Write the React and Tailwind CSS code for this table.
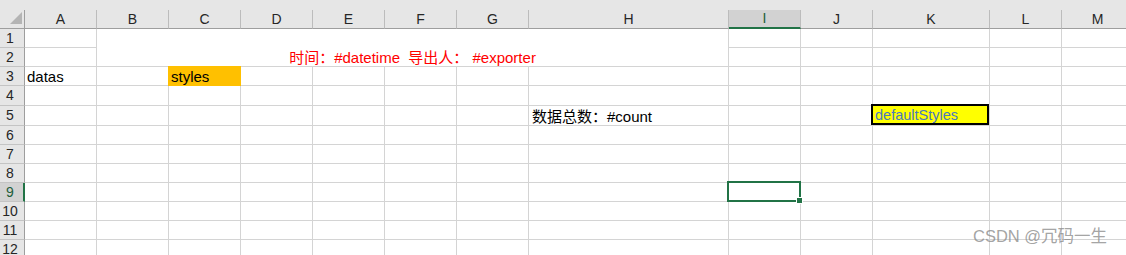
import React from 'react';

const COLS = ['A', 'B', 'C', 'D', 'E', 'F', 'G', 'H', 'I', 'J', 'K', 'L', 'M'];
const ROWS = [1, 2, 3, 4, 5, 6, 7, 8, 9, 10, 11, 12];
const MERGED = ['B', 'C', 'D', 'E', 'F', 'G', 'H'];

const GRID = 'border-r border-b border-[#d4d4d4]';
const TEXT = 'flex items-end pl-[2px] text-[15px] leading-[16px] whitespace-nowrap';

function ColHeader({ label, active }) {
  return (
    <div className="flex items-end bg-[#e6e6e6]">
      <div
        className={
          active
            ? 'flex h-[19px] w-full items-center justify-center border-r border-b-2 border-r-[#bcbcbc] border-b-[#217346] bg-[#d2d2d2] pb-px text-[14px] text-[#1e5e3a]'
            : 'flex h-[19px] w-full items-center justify-center border-r border-b border-r-[#bcbcbc] border-b-[#9e9e9e] pt-px text-[14px] text-[#262626]'
        }
      >
        {label}
      </div>
    </div>
  );
}

function RowHeader({ n, active }) {
  return (
    <div
      className={
        active
          ? 'flex items-center justify-center border-r-2 border-b border-r-[#217346] border-b-[#c4c4c4] bg-[#d2d2d2] pr-[3px] text-[14px] text-[#1e5e3a]'
          : 'flex items-center justify-center border-r border-b border-r-[#9e9e9e] border-b-[#c4c4c4] bg-[#e6e6e6] pr-[4px] text-[14px] text-[#262626]'
      }
    >
      {n}
    </div>
  );
}

function DataCell({ col, row }) {
  if (col === 'A' && row === 3) {
    return <div className={`${GRID} ${TEXT}`}>datas</div>;
  }
  if (col === 'C' && row === 3) {
    return (
      <div className={`relative ${GRID} ${TEXT}`}>
        <div className="absolute -top-px -left-px right-[-1px] bottom-[-1px] bg-[#ffc000]" />
        <span className="relative">styles</span>
      </div>
    );
  }
  if (col === 'H' && row === 5) {
    return <div className={`${GRID} ${TEXT} pl-[3px]`}>数据总数：#count</div>;
  }
  if (col === 'K' && row === 5) {
    return (
      <div className={`relative ${GRID}`}>
        <div className="absolute top-[-2px] left-[-2px] right-0 bottom-0 flex items-end border-2 border-black bg-[#ffff00] pl-[2px] text-[14.5px] leading-[16px] whitespace-nowrap text-[#4a78be]">
          defaultStyles
        </div>
      </div>
    );
  }
  if (col === 'I' && row === 9) {
    return (
      <div className={`relative ${GRID}`}>
        <div className="absolute top-[-2px] left-[-2px] right-[-1px] bottom-[-1px] border-2 border-[#217346]" />
        <div className="absolute right-[-3px] bottom-[-3px] h-[7px] w-[7px] border border-white bg-[#217346]" />
      </div>
    );
  }
  return <div className={GRID} />;
}

export default function App() {
  const cells = [];

  // corner cell with the select-all triangle
  cells.push(
    <div key="corner" className="flex items-end bg-[#e6e6e6]">
      <div className="relative h-[19px] w-full border-r border-b border-r-[#9e9e9e] border-b-[#9e9e9e]">
        <svg className="absolute left-[10px] top-[2px]" width="13" height="13" viewBox="0 0 13 13">
          <polygon points="12,0 12,12 0,12" fill="#b4b4b4" />
        </svg>
      </div>
    </div>
  );

  COLS.forEach((c) => cells.push(<ColHeader key={`h-${c}`} label={c} active={c === 'I'} />));

  ROWS.forEach((r) => {
    cells.push(<RowHeader key={`r-${r}`} n={r} active={r === 9} />);
    COLS.forEach((c) => {
      if (r === 1 && c === 'B') {
        cells.push(
          <div
            key="merged"
            className={`col-span-7 row-span-2 ${GRID} flex items-end justify-center text-[15px] leading-[16px] whitespace-pre text-[#ff0000]`}
          >
            {'时间：#datetime  导出人： #exporter'}
          </div>
        );
        return;
      }
      if (r <= 2 && MERGED.includes(c)) return;
      cells.push(<DataCell key={`${c}${r}`} col={c} row={r} />);
    });
  });

  return (
    <div className="relative h-[255px] w-[1126px] overflow-hidden bg-white font-['Liberation_Sans','Noto_Sans_CJK_SC',sans-serif] text-black">
      <div className="grid grid-cols-[25px_72px_72px_72px_72px_72px_72px_72px_200px_72px_72px_117px_72px_72px] grid-rows-[29px_19px_19px_19px_20px_20px_19px_19px_19px_19px_19px_19px_19px]">
        {cells}
      </div>
      <div className="pointer-events-none absolute left-[973px] top-[226px] text-[16.5px] leading-[20px] whitespace-nowrap text-[#8c8c8c]/80">
        CSDN @冗码一生
      </div>
    </div>
  );
}
